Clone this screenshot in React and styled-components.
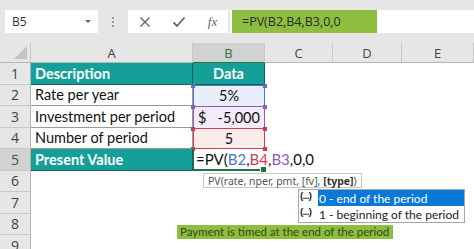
import { Fragment } from "react";
import styled, { createGlobalStyle } from "styled-components";

const GlobalStyle = createGlobalStyle`
  html, body {
    margin: 0;
    padding: 0;
    background: #ffffff;
  }
`;

const Page = styled.div`
  position: relative;
  width: 474px;
  height: 249px;
  overflow: hidden;
  background: #ffffff;
  font-family: "Open Sans", "Noto Sans", sans-serif;
`;

const Toolbar = styled.div`
  display: flex;
  align-items: center;
  height: 43px;
  padding: 0 0 0 5px;
  box-sizing: border-box;
  background: #e6e6e6;
`;

const NameBox = styled.div`
  display: flex;
  align-items: center;
  justify-content: space-between;
  width: 93px;
  height: 23px;
  padding: 0 7px 0 7px;
  box-sizing: border-box;
  background: #ffffff;
  font-size: 12px;
  color: #333;
`;

const Caret = styled.span`
  width: 0;
  height: 0;
  border-left: 3px solid transparent;
  border-right: 3px solid transparent;
  border-top: 3px solid #666;
`;

const Dots = styled.div`
  display: flex;
  flex-direction: column;
  gap: 2px;
  margin: 0 14px 0 14px;
  span {
    width: 2px;
    height: 2px;
    background: #9a9a9a;
  }
`;

const FxButtons = styled.div`
  display: flex;
  align-items: center;
  justify-content: space-around;
  width: 100px;
  height: 23px;
  background: #ffffff;
  color: #555;
`;

const FxLabel = styled.span`
  font-family: "Liberation Serif", serif;
  font-style: italic;
  font-size: 13px;
  color: #666;
`;

const FormulaInput = styled.div`
  display: flex;
  flex: 1;
  height: 23px;
  margin-left: 2px;
  background: #ffffff;
`;

const FormulaText = styled.div`
  display: flex;
  align-items: center;
  width: 145px;
  margin-left: 2px;
  padding-left: 10px;
  box-sizing: border-box;
  background: #8dbe3f;
  font-size: 12.5px;
  color: #2b2b2b;
`;

const Sheet = styled.div`
  display: grid;
  grid-template-columns: 31px 162px 72px 68px 69px 72px;
  grid-template-rows: 20px repeat(9, 21.5px);
`;

const Corner = styled.div`
  position: relative;
  background: #e6e6e6;
  border-right: 1px solid #c8c8c8;
  border-bottom: 1px solid #b5b5b5;
  &::after {
    content: "";
    position: absolute;
    right: 3px;
    bottom: 3px;
    width: 0;
    height: 0;
    border-left: 13px solid transparent;
    border-bottom: 13px solid #c4c4c4;
  }
`;

const ColHead = styled.div`
  display: flex;
  align-items: center;
  justify-content: center;
  background: ${({ $active }) => ($active ? "#d2d2d2" : "#e6e6e6")};
  color: ${({ $active }) => ($active ? "#3b6e48" : "#444")};
  border-right: 1px solid #c8c8c8;
  border-bottom: 1px solid ${({ $active }) => ($active ? "#217346" : "#b5b5b5")};
  box-sizing: border-box;
  font-size: 13px;
`;

const RowHead = styled.div`
  display: flex;
  align-items: center;
  justify-content: center;
  overflow: hidden;
  background: ${({ $active }) => ($active ? "#d2d2d2" : "#e6e6e6")};
  color: ${({ $active }) => ($active ? "#2f5e3c" : "#444")};
  border-bottom: 1px solid #c8c8c8;
  border-right: 1px solid #b5b5b5;
  box-sizing: border-box;
  font-size: 14px;
`;

const Cell = styled.div`
  position: relative;
  display: flex;
  align-items: center;
  justify-content: ${({ $center }) => ($center ? "center" : "flex-start")};
  padding: 0 4px;
  box-sizing: border-box;
  font-family: Lato, "Liberation Sans", sans-serif;
  font-size: 14.5px;
  white-space: pre;
  color: #111;
  border-right: 1px solid #9b9b9b;
  border-bottom: 1px solid #9b9b9b;
`;

const HeadCell = styled(Cell)`
  background: #14a098;
  color: #ffffff;
  font-weight: 700;
  border-right: 1px solid #1d5e57;
  border-bottom: 1px solid #1d5e57;
`;

const RangeCell = styled(Cell)`
  background: ${({ $fill }) => $fill};
  border: 1px solid ${({ $edge }) => $edge};
  border-bottom-width: ${({ $last }) => ($last ? "1px" : "0")};
`;

const Handle = styled.span`
  position: absolute;
  width: 4px;
  height: 4px;
  background: ${({ $edge }) => $edge};
  ${({ $v }) => ($v === "top" ? "top: -2px;" : "bottom: -3px;")}
  ${({ $h }) => ($h === "left" ? "left: -3px;" : "right: -3px;")}
`;

const EditCell = styled(Cell)`
  overflow: visible;
  z-index: 2;
  padding-left: 2px;
  font-size: 15px;
  white-space: nowrap;
  border: 0;
  border-bottom: 2px solid #217346;
  border-left: 1px solid #217346;
`;

const FillHandle = styled.span`
  position: absolute;
  right: -2px;
  bottom: -4px;
  width: 5px;
  height: 5px;
  background: #217346;
  border: 1px solid #ffffff;
`;

const Ref = styled.span`
  color: ${({ $tone }) => $tone};
`;

const TextCaret = styled.span`
  display: inline-block;
  width: 1px;
  height: 17px;
  margin-left: 1px;
  background: #111;
`;

const Empty = styled.div``;

const Tooltip = styled.div`
  position: absolute;
  left: 203px;
  top: 173px;
  padding: 0 4px;
  height: 15px;
  line-height: 14px;
  box-sizing: border-box;
  white-space: nowrap;
  background: #ffffff;
  border: 1px solid #c6c6c6;
  font-family: "Noto Sans", sans-serif;
  font-size: 10.5px;
  color: #555;
  b {
    color: #333;
  }
`;

const Dropdown = styled.div`
  position: absolute;
  left: 298px;
  top: 189px;
  width: 167px;
  box-sizing: border-box;
  border: 1px solid #a6a6a6;
  background: #ffffff;
  font-family: Lato, "Liberation Sans", sans-serif;
  font-size: 12px;
  white-space: nowrap;
`;

const Option = styled.div`
  display: flex;
  align-items: center;
  height: 16px;
`;

const OptIcon = styled.span`
  flex: 0 0 19px;
  padding-left: 1px;
  box-sizing: border-box;
  align-self: flex-start;
  font-family: "Liberation Sans", sans-serif;
  font-size: 9.5px;
  font-weight: 700;
  line-height: 11px;
  letter-spacing: -0.6px;
  color: #222;
`;

const OptText = styled.span`
  flex: 1;
  height: 100%;
  display: flex;
  align-items: center;
  padding-left: 1px;
  background: ${({ $selected }) => ($selected ? "#0a78d7" : "transparent")};
  color: ${({ $selected }) => ($selected ? "#ffffff" : "#222")};
`;

const Note = styled.div`
  position: absolute;
  left: 177px;
  top: 225px;
  width: 216px;
  height: 14px;
  padding-left: 3px;
  box-sizing: border-box;
  white-space: nowrap;
  background: #8dbe3f;
  font-family: Lato, "Liberation Sans", sans-serif;
  font-size: 11.5px;
  line-height: 14px;
  color: #2f4a14;
`;

const ranges = [
  { row: 2, value: "5%", edge: "#4a78c6", fill: "#e9eff8" },
  { row: 3, value: "$   -5,000", edge: "#8a5cb8", fill: "#f1ecf7" },
  { row: 4, value: "5", edge: "#cf3e4f", fill: "#fbecec" },
];

const labels = {
  2: "Rate per year",
  3: "Investment per period",
  4: "Number of period",
};

const cols = ["A", "B", "C", "D", "E"];
const corners = [
  ["top", "left"],
  ["top", "right"],
  ["bottom", "left"],
  ["bottom", "right"],
];

export default function App() {
  return (
    <Page>
      <GlobalStyle />
      <Toolbar>
        <NameBox>
          B5
          <Caret />
        </NameBox>
        <Dots>
          <span />
          <span />
          <span />
        </Dots>
        <FxButtons>
          <svg width="12" height="12" viewBox="0 0 12 12">
            <path d="M1.5 1.5 L10.5 10.5 M10.5 1.5 L1.5 10.5" stroke="#666" strokeWidth="1.4" />
          </svg>
          <svg width="14" height="12" viewBox="0 0 14 12">
            <path d="M1.5 6.5 L5 10 L12.5 1.5" stroke="#666" strokeWidth="1.8" fill="none" />
          </svg>
          <FxLabel>fx</FxLabel>
        </FxButtons>
        <FormulaInput>
          <FormulaText>=PV(B2,B4,B3,0,0</FormulaText>
        </FormulaInput>
      </Toolbar>

      <Sheet>
        <Corner />
        {cols.map((c) => (
          <ColHead key={c} $active={c === "B"}>
            {c}
          </ColHead>
        ))}

        <RowHead>1</RowHead>
        <HeadCell>Description</HeadCell>
        <HeadCell $center>Data</HeadCell>
        <Empty />
        <Empty />
        <Empty />

        {ranges.map((r) => (
          <Fragment key={r.row}>
            <RowHead>{r.row}</RowHead>
            <Cell>{labels[r.row]}</Cell>
            <RangeCell $center $edge={r.edge} $fill={r.fill} $last={r.row === 4}>
              {r.value}
              {corners.map(([v, h]) => (
                <Handle key={v + h} $edge={r.edge} $v={v} $h={h} />
              ))}
            </RangeCell>
            <Empty />
            <Empty />
            <Empty />
          </Fragment>
        ))}

        <RowHead $active>5</RowHead>
        <HeadCell>Present Value</HeadCell>
        <EditCell>
          =PV(<Ref $tone="#4a78c6">B2</Ref>,<Ref $tone="#cf3e4f">B4</Ref>,
          <Ref $tone="#8a5cb8">B3</Ref>,0,0
          <TextCaret />
          <FillHandle />
        </EditCell>
        <Empty />
        <Empty />
        <Empty />

        {[6, 7, 8, 9].map((n) => (
          <Fragment key={n}>
            <RowHead>{n}</RowHead>
            <Empty />
            <Empty />
            <Empty />
            <Empty />
            <Empty />
          </Fragment>
        ))}
      </Sheet>

      <Tooltip>
        PV(rate, nper, pmt, [fv], <b>[type]</b>)
      </Tooltip>

      <Dropdown>
        <Option>
          <OptIcon>(...)</OptIcon>
          <OptText $selected>0 - end of the period</OptText>
        </Option>
        <Option>
          <OptIcon>(...)</OptIcon>
          <OptText>1 - beginning of the period</OptText>
        </Option>
      </Dropdown>

      <Note>Payment is timed at the end of the period</Note>
    </Page>
  );
}
